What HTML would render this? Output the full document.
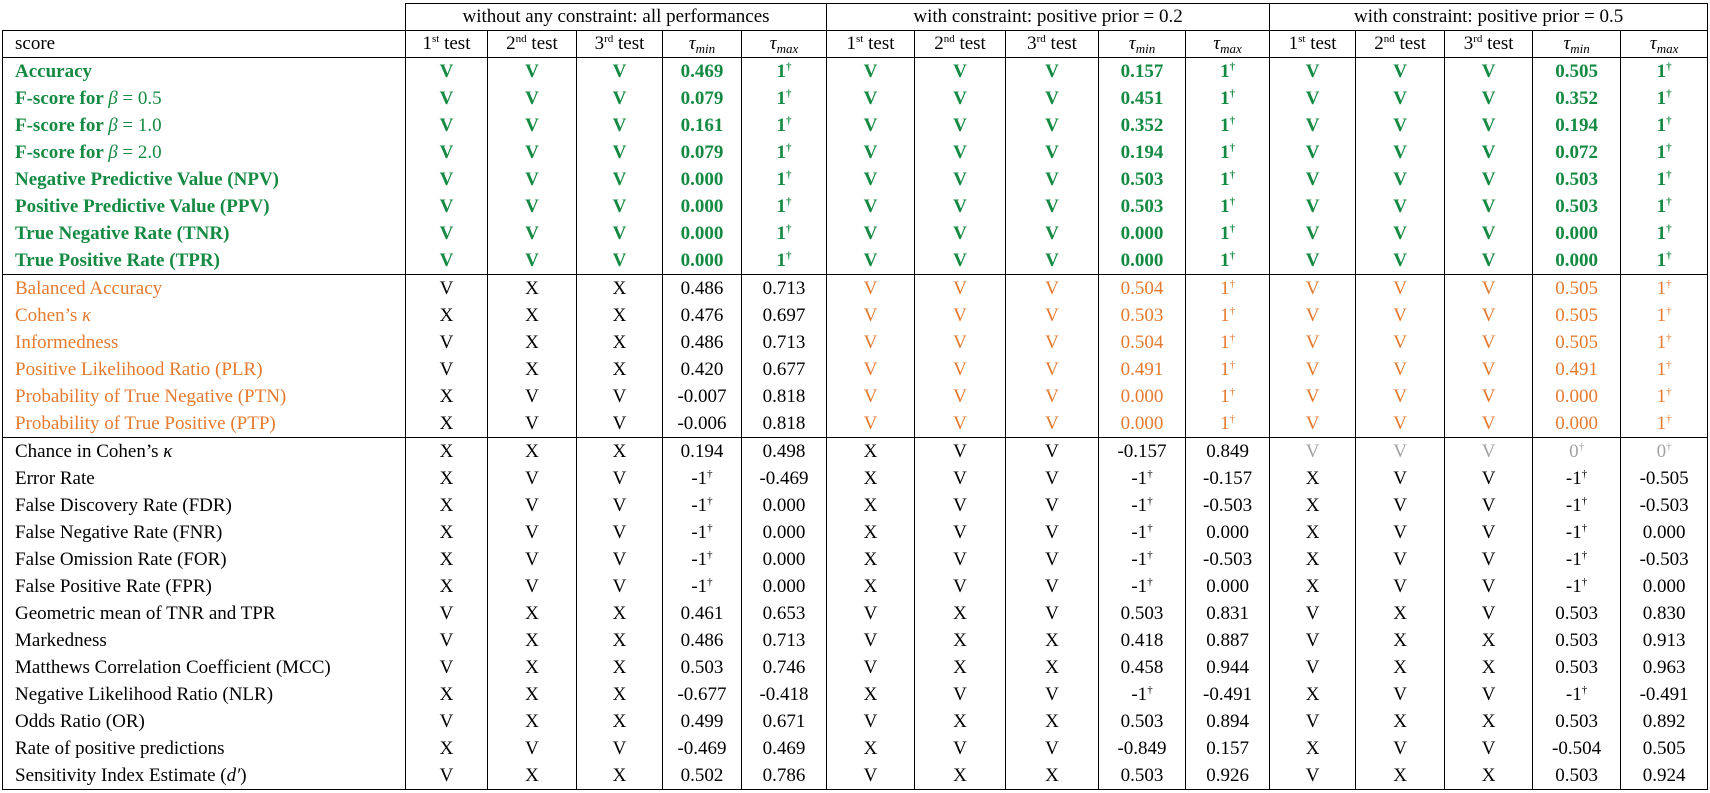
<!DOCTYPE html>
<html><head><meta charset="utf-8"><style>
html,body{margin:0;padding:0;background:#fff;width:1710px;height:793px;overflow:hidden}
table{position:absolute;left:2px;top:3px;border-collapse:collapse;table-layout:fixed;width:1705px;font-family:"Liberation Serif",serif;font-size:19px;color:#000}
td{padding:0;text-align:center;white-space:nowrap;overflow:visible;box-sizing:border-box}
td.l{text-align:left;padding-left:12px}
.b td{border-left:1px solid #000;border-right:1px solid #000}
tr.d{height:27px}
tr.d td{height:27px;line-height:27px}
tr.h1,tr.h1 td{height:26px;line-height:26px}
tr.h2,tr.h2 td{height:26px;line-height:26px}
tr.s td{border-top:1px solid #000}
.g{color:#158a43;font-weight:bold}
.o{color:#e57a30}
.gr{color:#a3a3a3}
sup{font-size:11px;line-height:0;vertical-align:7px}
.m{font-weight:normal;font-style:italic}
.n{font-weight:normal}
sub{font-size:13px;line-height:0;vertical-align:-4px;font-style:italic}
</style></head><body>
<table>
<colgroup><col style="width:403px"><col style="width:82px"><col style="width:89px"><col style="width:86px"><col style="width:79px"><col style="width:85px"><col style="width:88px"><col style="width:91px"><col style="width:93px"><col style="width:87px"><col style="width:84px"><col style="width:86px"><col style="width:89px"><col style="width:88px"><col style="width:88px"><col style="width:87px"></colgroup>
<tr class="h1"><td></td><td colspan="5" style="border:1px solid #000;border-bottom:none">without any constraint: all performances</td><td colspan="5" style="border:1px solid #000;border-bottom:none">with constraint: positive prior = 0.2</td><td colspan="5" style="border:1px solid #000;border-bottom:none">with constraint: positive prior = 0.5</td></tr>
<tr class="h2 b"><td class="l" style="border:1px solid #000">score</td>
<td style="border:1px solid #000">1<sup>st</sup> test</td><td style="border:1px solid #000">2<sup>nd</sup> test</td><td style="border:1px solid #000">3<sup>rd</sup> test</td><td style="border:1px solid #000"><i>τ<sub>min</sub></i></td><td style="border:1px solid #000"><i>τ<sub>max</sub></i></td>
<td style="border:1px solid #000">1<sup>st</sup> test</td><td style="border:1px solid #000">2<sup>nd</sup> test</td><td style="border:1px solid #000">3<sup>rd</sup> test</td><td style="border:1px solid #000"><i>τ<sub>min</sub></i></td><td style="border:1px solid #000"><i>τ<sub>max</sub></i></td>
<td style="border:1px solid #000">1<sup>st</sup> test</td><td style="border:1px solid #000">2<sup>nd</sup> test</td><td style="border:1px solid #000">3<sup>rd</sup> test</td><td style="border:1px solid #000"><i>τ<sub>min</sub></i></td><td style="border:1px solid #000"><i>τ<sub>max</sub></i></td></tr>
<tbody class="b">
<tr class="d g"><td class="l">Accuracy</td><td>V</td><td>V</td><td>V</td><td>0.469</td><td>1<sup>†</sup></td><td>V</td><td>V</td><td>V</td><td>0.157</td><td>1<sup>†</sup></td><td>V</td><td>V</td><td>V</td><td>0.505</td><td>1<sup>†</sup></td></tr>
<tr class="d g"><td class="l">F-score for <span class="m">β</span><span class="n"> = 0.5</span></td><td>V</td><td>V</td><td>V</td><td>0.079</td><td>1<sup>†</sup></td><td>V</td><td>V</td><td>V</td><td>0.451</td><td>1<sup>†</sup></td><td>V</td><td>V</td><td>V</td><td>0.352</td><td>1<sup>†</sup></td></tr>
<tr class="d g"><td class="l">F-score for <span class="m">β</span><span class="n"> = 1.0</span></td><td>V</td><td>V</td><td>V</td><td>0.161</td><td>1<sup>†</sup></td><td>V</td><td>V</td><td>V</td><td>0.352</td><td>1<sup>†</sup></td><td>V</td><td>V</td><td>V</td><td>0.194</td><td>1<sup>†</sup></td></tr>
<tr class="d g"><td class="l">F-score for <span class="m">β</span><span class="n"> = 2.0</span></td><td>V</td><td>V</td><td>V</td><td>0.079</td><td>1<sup>†</sup></td><td>V</td><td>V</td><td>V</td><td>0.194</td><td>1<sup>†</sup></td><td>V</td><td>V</td><td>V</td><td>0.072</td><td>1<sup>†</sup></td></tr>
<tr class="d g"><td class="l">Negative Predictive Value (NPV)</td><td>V</td><td>V</td><td>V</td><td>0.000</td><td>1<sup>†</sup></td><td>V</td><td>V</td><td>V</td><td>0.503</td><td>1<sup>†</sup></td><td>V</td><td>V</td><td>V</td><td>0.503</td><td>1<sup>†</sup></td></tr>
<tr class="d g"><td class="l">Positive Predictive Value (PPV)</td><td>V</td><td>V</td><td>V</td><td>0.000</td><td>1<sup>†</sup></td><td>V</td><td>V</td><td>V</td><td>0.503</td><td>1<sup>†</sup></td><td>V</td><td>V</td><td>V</td><td>0.503</td><td>1<sup>†</sup></td></tr>
<tr class="d g"><td class="l">True Negative Rate (TNR)</td><td>V</td><td>V</td><td>V</td><td>0.000</td><td>1<sup>†</sup></td><td>V</td><td>V</td><td>V</td><td>0.000</td><td>1<sup>†</sup></td><td>V</td><td>V</td><td>V</td><td>0.000</td><td>1<sup>†</sup></td></tr>
<tr class="d g"><td class="l">True Positive Rate (TPR)</td><td>V</td><td>V</td><td>V</td><td>0.000</td><td>1<sup>†</sup></td><td>V</td><td>V</td><td>V</td><td>0.000</td><td>1<sup>†</sup></td><td>V</td><td>V</td><td>V</td><td>0.000</td><td>1<sup>†</sup></td></tr>
<tr class="d s"><td class="l o">Balanced Accuracy</td><td>V</td><td>X</td><td>X</td><td>0.486</td><td>0.713</td><td class="o">V</td><td class="o">V</td><td class="o">V</td><td class="o">0.504</td><td class="o">1<sup>†</sup></td><td class="o">V</td><td class="o">V</td><td class="o">V</td><td class="o">0.505</td><td class="o">1<sup>†</sup></td></tr>
<tr class="d"><td class="l o">Cohen’s <i>κ</i></td><td>X</td><td>X</td><td>X</td><td>0.476</td><td>0.697</td><td class="o">V</td><td class="o">V</td><td class="o">V</td><td class="o">0.503</td><td class="o">1<sup>†</sup></td><td class="o">V</td><td class="o">V</td><td class="o">V</td><td class="o">0.505</td><td class="o">1<sup>†</sup></td></tr>
<tr class="d"><td class="l o">Informedness</td><td>V</td><td>X</td><td>X</td><td>0.486</td><td>0.713</td><td class="o">V</td><td class="o">V</td><td class="o">V</td><td class="o">0.504</td><td class="o">1<sup>†</sup></td><td class="o">V</td><td class="o">V</td><td class="o">V</td><td class="o">0.505</td><td class="o">1<sup>†</sup></td></tr>
<tr class="d"><td class="l o">Positive Likelihood Ratio (PLR)</td><td>V</td><td>X</td><td>X</td><td>0.420</td><td>0.677</td><td class="o">V</td><td class="o">V</td><td class="o">V</td><td class="o">0.491</td><td class="o">1<sup>†</sup></td><td class="o">V</td><td class="o">V</td><td class="o">V</td><td class="o">0.491</td><td class="o">1<sup>†</sup></td></tr>
<tr class="d"><td class="l o">Probability of True Negative (PTN)</td><td>X</td><td>V</td><td>V</td><td>-0.007</td><td>0.818</td><td class="o">V</td><td class="o">V</td><td class="o">V</td><td class="o">0.000</td><td class="o">1<sup>†</sup></td><td class="o">V</td><td class="o">V</td><td class="o">V</td><td class="o">0.000</td><td class="o">1<sup>†</sup></td></tr>
<tr class="d"><td class="l o">Probability of True Positive (PTP)</td><td>X</td><td>V</td><td>V</td><td>-0.006</td><td>0.818</td><td class="o">V</td><td class="o">V</td><td class="o">V</td><td class="o">0.000</td><td class="o">1<sup>†</sup></td><td class="o">V</td><td class="o">V</td><td class="o">V</td><td class="o">0.000</td><td class="o">1<sup>†</sup></td></tr>
<tr class="d s"><td class="l">Chance in Cohen’s <i>κ</i></td><td>X</td><td>X</td><td>X</td><td>0.194</td><td>0.498</td><td>X</td><td>V</td><td>V</td><td>-0.157</td><td>0.849</td><td class="gr">V</td><td class="gr">V</td><td class="gr">V</td><td class="gr">0<sup>†</sup></td><td class="gr">0<sup>†</sup></td></tr>
<tr class="d"><td class="l">Error Rate</td><td>X</td><td>V</td><td>V</td><td>-1<sup>†</sup></td><td>-0.469</td><td>X</td><td>V</td><td>V</td><td>-1<sup>†</sup></td><td>-0.157</td><td>X</td><td>V</td><td>V</td><td>-1<sup>†</sup></td><td>-0.505</td></tr>
<tr class="d"><td class="l">False Discovery Rate (FDR)</td><td>X</td><td>V</td><td>V</td><td>-1<sup>†</sup></td><td>0.000</td><td>X</td><td>V</td><td>V</td><td>-1<sup>†</sup></td><td>-0.503</td><td>X</td><td>V</td><td>V</td><td>-1<sup>†</sup></td><td>-0.503</td></tr>
<tr class="d"><td class="l">False Negative Rate (FNR)</td><td>X</td><td>V</td><td>V</td><td>-1<sup>†</sup></td><td>0.000</td><td>X</td><td>V</td><td>V</td><td>-1<sup>†</sup></td><td>0.000</td><td>X</td><td>V</td><td>V</td><td>-1<sup>†</sup></td><td>0.000</td></tr>
<tr class="d"><td class="l">False Omission Rate (FOR)</td><td>X</td><td>V</td><td>V</td><td>-1<sup>†</sup></td><td>0.000</td><td>X</td><td>V</td><td>V</td><td>-1<sup>†</sup></td><td>-0.503</td><td>X</td><td>V</td><td>V</td><td>-1<sup>†</sup></td><td>-0.503</td></tr>
<tr class="d"><td class="l">False Positive Rate (FPR)</td><td>X</td><td>V</td><td>V</td><td>-1<sup>†</sup></td><td>0.000</td><td>X</td><td>V</td><td>V</td><td>-1<sup>†</sup></td><td>0.000</td><td>X</td><td>V</td><td>V</td><td>-1<sup>†</sup></td><td>0.000</td></tr>
<tr class="d"><td class="l">Geometric mean of TNR and TPR</td><td>V</td><td>X</td><td>X</td><td>0.461</td><td>0.653</td><td>V</td><td>X</td><td>V</td><td>0.503</td><td>0.831</td><td>V</td><td>X</td><td>V</td><td>0.503</td><td>0.830</td></tr>
<tr class="d"><td class="l">Markedness</td><td>V</td><td>X</td><td>X</td><td>0.486</td><td>0.713</td><td>V</td><td>X</td><td>X</td><td>0.418</td><td>0.887</td><td>V</td><td>X</td><td>X</td><td>0.503</td><td>0.913</td></tr>
<tr class="d"><td class="l">Matthews Correlation Coefficient (MCC)</td><td>V</td><td>X</td><td>X</td><td>0.503</td><td>0.746</td><td>V</td><td>X</td><td>X</td><td>0.458</td><td>0.944</td><td>V</td><td>X</td><td>X</td><td>0.503</td><td>0.963</td></tr>
<tr class="d"><td class="l">Negative Likelihood Ratio (NLR)</td><td>X</td><td>X</td><td>X</td><td>-0.677</td><td>-0.418</td><td>X</td><td>V</td><td>V</td><td>-1<sup>†</sup></td><td>-0.491</td><td>X</td><td>V</td><td>V</td><td>-1<sup>†</sup></td><td>-0.491</td></tr>
<tr class="d"><td class="l">Odds Ratio (OR)</td><td>V</td><td>X</td><td>X</td><td>0.499</td><td>0.671</td><td>V</td><td>X</td><td>X</td><td>0.503</td><td>0.894</td><td>V</td><td>X</td><td>X</td><td>0.503</td><td>0.892</td></tr>
<tr class="d"><td class="l">Rate of positive predictions</td><td>X</td><td>V</td><td>V</td><td>-0.469</td><td>0.469</td><td>X</td><td>V</td><td>V</td><td>-0.849</td><td>0.157</td><td>X</td><td>V</td><td>V</td><td>-0.504</td><td>0.505</td></tr>
<tr class="d" style="border-bottom:1px solid #000"><td class="l">Sensitivity Index Estimate (<i>d′</i>)</td><td>V</td><td>X</td><td>X</td><td>0.502</td><td>0.786</td><td>V</td><td>X</td><td>X</td><td>0.503</td><td>0.926</td><td>V</td><td>X</td><td>X</td><td>0.503</td><td>0.924</td></tr>
</tbody>
</table>
</body></html>
